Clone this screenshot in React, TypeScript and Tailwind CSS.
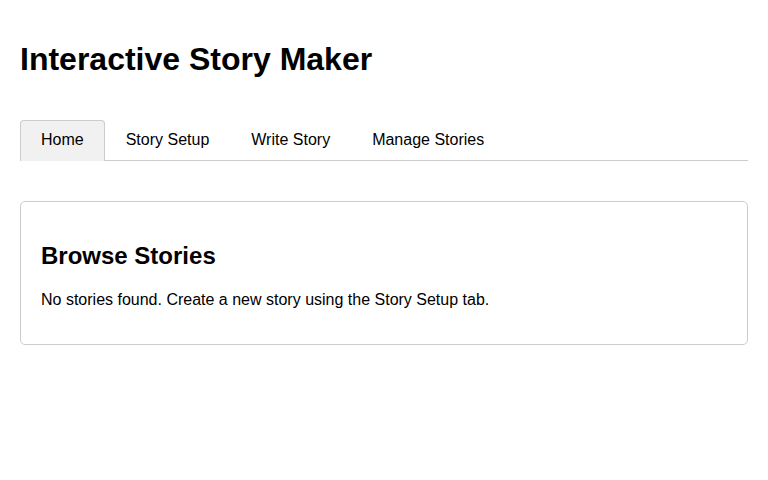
import { useState } from "react";

const tabs = ["Home", "Story Setup", "Write Story", "Manage Stories"];

export default function App() {
  const [active, setActive] = useState("Home");

  return (
    <div className="min-h-screen bg-white p-5 font-['Liberation_Sans',Arial,sans-serif] text-black">
      <h1 className="mt-[21.44px] mb-[42px] text-[32px] leading-[37px] font-bold">
        Interactive Story Maker
      </h1>

      <div className="flex border-b border-[#ccc]">
        {tabs.map((tab) => (
          <button
            key={tab}
            onClick={() => setActive(tab)}
            className={
              active === tab
                ? "-mb-px rounded-t-[4px] border border-b-0 border-[#ccc] bg-[#f1f1f1] px-5 pt-[9px] pb-[12px] text-base leading-[19px]"
                : "-mb-px rounded-t-[4px] border border-b-0 border-transparent bg-transparent px-5 pt-[9px] pb-[12px] text-base leading-[19px]"
            }
          >
            {tab}
          </button>
        ))}
      </div>

      <div className="mt-10 rounded-[5px] border border-[#ccc] p-5">
        <h2 className="my-5 text-2xl leading-[28px] font-bold">
          Browse Stories
        </h2>
        <p className="mt-4 mb-[15px] text-base leading-[19px]">
          No stories found. Create a new story using the Story Setup tab.
        </p>
      </div>
    </div>
  );
}
